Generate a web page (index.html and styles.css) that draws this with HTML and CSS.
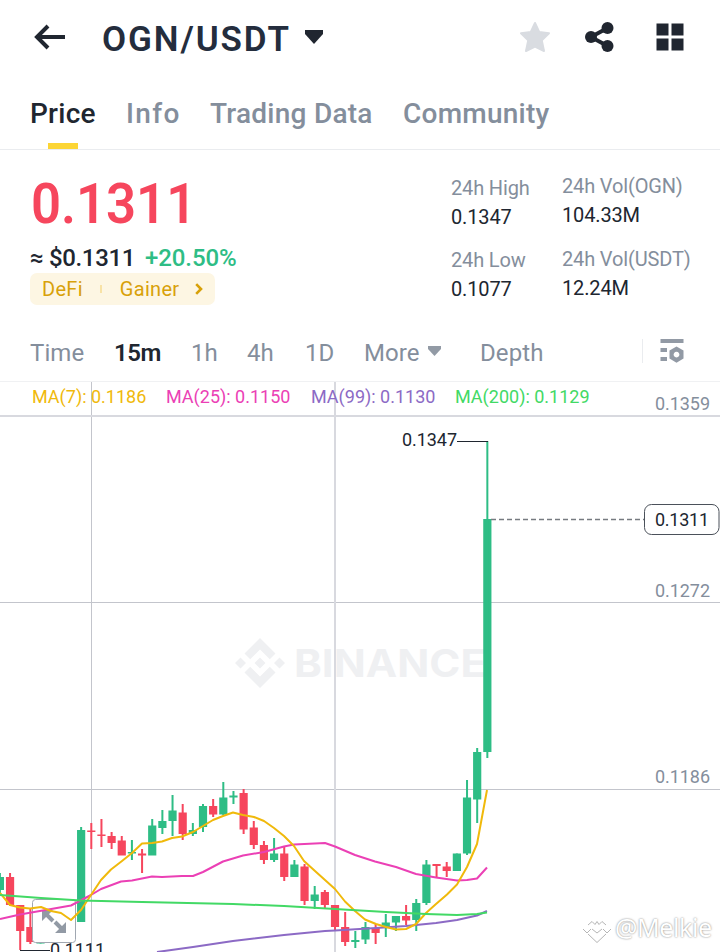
FILE: index.html
```html
<!DOCTYPE html>
<html lang="en">
<head>
  <meta charset="UTF-8" />
  <meta name="viewport" content="width=device-width, initial-scale=1.0"/>
  <title>OGN/USDT</title>
  <link rel="stylesheet" href="styles.css">
</head>
<body>

  <header class="topbar">
    <svg class="back" width="32" height="26" viewBox="0 0 32 26">
      <path d="M14 2 L3 13 L14 24 M3 13 H31" fill="none" stroke="#202630" stroke-width="4"/>
    </svg>
    <h1>OGN/USDT</h1>
    <svg class="caret" width="18" height="14" viewBox="0 0 18 14">
      <path d="M0 0 H18 V4 L9 14 L0 4 Z" fill="#202630"/>
    </svg>
    <div class="actions">
      <svg width="32" height="32" viewBox="0 0 32 32">
        <path d="M16 2 L20.2 11 L30 12.2 L22.8 19.4 L25 30 L16 25.5 L7 30 L9.2 19.4 L2 12.2 L11.8 11 Z" fill="#d9dce1" stroke="#d9dce1" stroke-width="2" stroke-linejoin="round"/>
      </svg>
      <svg width="30" height="32" viewBox="0 0 30 32">
        <path d="M23.5 7 L7 16 L23.5 25" fill="none" stroke="#202630" stroke-width="4"/>
        <circle cx="7" cy="16" r="6" fill="#202630"/>
        <circle cx="23.5" cy="7" r="6" fill="#202630"/>
        <circle cx="23.5" cy="25" r="6" fill="#202630"/>
      </svg>
      <svg width="28" height="28" viewBox="0 0 28 28">
        <path d="M0.5 0.5 h12 v12 h-12 z M15.5 0.5 h12 v12 h-12 z M0.5 15.5 h12 v12 h-12 z M15.5 15.5 h12 v12 h-12 z" fill="#202630"/>
      </svg>
    </div>
  </header>

  <nav class="tabs">
    <span class="tab active">Price</span>
    <span class="tab info">Info</span>
    <span class="tab">Trading Data</span>
    <span class="tab">Community</span>
  </nav>

  <section class="summary">
    <div class="quote">
      <div class="last-price">0.1311</div>
      <div class="fiat"><span>≈ $0.1311</span><span class="change">+20.50%</span></div>
      <div class="tags">
        <span>DeFi</span>
        <i class="sep"></i>
        <span>Gainer</span>
        <svg width="8" height="12" viewBox="0 0 8 12"><path d="M1.2 1.2 L6 6 L1.2 10.8" fill="none" stroke="#d8a109" stroke-width="2.6"/></svg>
      </div>
    </div>
    <dl class="stats">
      <div><dt>24h High</dt><dd>0.1347</dd></div>
      <div><dt>24h Low</dt><dd>0.1077</dd></div>
    </dl>
    <dl class="stats volume">
      <div><dt>24h Vol(OGN)</dt><dd>104.33M</dd></div>
      <div><dt>24h Vol(USDT)</dt><dd>12.24M</dd></div>
    </dl>
  </section>

  <nav class="intervals">
    <span>Time</span>
    <span class="selected">15m</span>
    <span>1h</span>
    <span>4h</span>
    <span>1D</span>
    <span class="more">More
      <svg width="13" height="10" viewBox="0 0 13 10"><path d="M0 0 H13 V3 L6.5 10 L0 3 Z" fill="#929aa5"/></svg>
    </span>
    <span>Depth</span>
    <div class="settings">
      <svg width="24" height="24" viewBox="0 0 24 24">
        <path d="M0.5 0 H23.5 V4 H0.5 Z M0.5 9 H7 V13 H0.5 Z M0.5 18 H7 V22 H0.5 Z" fill="#929aa5"/>
        <path fill-rule="evenodd" d="M16.5 7.5 L23.5 11.5 V19.5 L16.5 23.8 L9.5 19.5 V11.5 Z M16.5 12.7 a2.9 2.9 0 1 0 0.01 0 Z" fill="#929aa5"/>
      </svg>
    </div>
  </nav>

  <main class="chart">
    <svg width="720" height="570" viewBox="0 382 720 570">
      <!-- watermark -->
      <g fill="#eff0f2">
        <path d="M260 638 L275.5 653.5 L269.8 659.2 L260 649.4 L250.2 659.2 L244.5 653.5 Z"/>
        <path d="M260 688 L275.5 672.5 L269.8 666.8 L260 676.6 L250.2 666.8 L244.5 672.5 Z"/>
        <path d="M260 657.5 l5.5 5.5 l-5.5 5.5 l-5.5 -5.5 z M240.5 657.5 l5.5 5.5 l-5.5 5.5 l-5.5 -5.5 z M279.5 657.5 l5.5 5.5 l-5.5 5.5 l-5.5 -5.5 z"/>
        <text class="brand" x="294" y="677" textLength="192" lengthAdjust="spacingAndGlyphs">BINANCE</text>
      </g>

      <!-- grid -->
      <path d="M0 602.5 H720 M0 789.5 H720 M91.5 382 V952" stroke="#c3c5cc"/>
      <path d="M0 416 H720 M335 382 V952" stroke="#d8d9df" stroke-width="2"/>

      <g class="axis">
        <text x="655" y="410" textLength="55">0.1359</text>
        <text x="655" y="597" textLength="55">0.1272</text>
        <text x="655" y="783" textLength="55">0.1186</text>
      </g>

      <g id="candles"></g>

      <!-- fullscreen toggle -->
      <rect x="32.5" y="899.5" width="43" height="43" rx="3" fill="#fff" stroke="#a0a7b1"/>
      <path d="M42 910 H53 L42 921 Z M66 933 H55 L66 922 Z" fill="#929aa5"/>
      <path d="M46 914 L53 921 M55 922 L62 929" stroke="#929aa5" stroke-width="4"/>

      <g class="ma">
        <polyline stroke="#8c6ac5" points="157,952 193,947 233,941 284,935 325,931 335,930.5 376,928 406,926 436,923 457,920 477,915.5 487,911"/>
        <polyline stroke="#eb40b5" points="0,919 20,914.5 71,905.5 91,895 101,889 121,881.5 132,880.5 152,876.5 162,877 182,876 193,876 203,872 223,861.5 243,855.5 264,852 284,846.5 294,844.5 325,843 335,846.5 355,855 375,861.5 396,867 416,874 436,877.5 457,880.5 467,880 477,878.5 487,867.5"/>
        <polyline stroke="#f0b90b" points="0,893 10,905 20,907.5 30,908.5 41,907 51,911 61,913 71,920 81,910 91,895 101,880 111,869.5 122,861 132,853 142,843.5 152,843 162,841.5 172,838 182,836.5 193,832 203,826 213,820 223,816 233,812.5 243,815 254,817 264,821 274,828 284,836 294,846 304,861 315,871 325,880 335,889 345,901.5 355,911 365,919.5 376,924 386,927 396,929.5 406,929 416,924 426,913 436,904 447,894.5 457,884.5 467,867 477,844 487,790"/>
        <polyline stroke="#42d965" points="0,895 41,898 81,900.5 142,902 233,904 284,906 335,909 386,912 426,914 457,915 477,914 487,912.5"/>
      </g>

      <!-- high / low / last markers -->
      <path d="M457 441.5 H488 M20 950.5 H50" stroke="#202630"/>
      <path d="M491 519.5 H644" stroke="#777b81" stroke-width="1.3" stroke-dasharray="5 3"/>
      <rect x="644.5" y="504.5" width="74.5" height="30" rx="7" fill="#fff" stroke="#4b515a"/>
      <g class="marker">
        <text x="402" y="446" textLength="55">0.1347</text>
        <text x="655" y="526" textLength="54">0.1311</text>
        <text x="50" y="956" textLength="55">0.1111</text>
      </g>

      <g class="author">
        <path d="M588 925 l4 -3.5 l3 3 l2 -3 l2 3 l3 -3 l4 3.5 M583 929 l4 4 l4 -4 M592 929 l5 4 l5 -4 M603 929 l4 4 l4 -4 M588 934 l9 8.5 l9 -8.5"/>
        <text x="615" y="937" textLength="97">@Melkie</text>
      </g>
    </svg>

    <div class="legend">
      <span class="ma7">MA(7): 0.1186</span>
      <span class="ma25">MA(25): 0.1150</span>
      <span class="ma99">MA(99): 0.1130</span>
      <span class="ma200">MA(200): 0.1129</span>
    </div>
  </main>

  <script src="script.js"></script>
</body>
</html>
```
FILE: styles.css
```css
html, body {
  margin: 0;
  padding: 0;
}

body {
  width: 720px;
  height: 952px;
  overflow: hidden;
  background-color: #fff;
  color: #202630;
  font-family: Roboto, "Liberation Sans", sans-serif;
}

svg {
  display: block;
}

.topbar {
  display: flex;
  align-items: center;
  height: 74px;
  padding: 0 36px 0 34px;
}

h1 {
  margin: 6px 0 0 36px;
  font-size: 35px;
  line-height: 42px;
  font-weight: 600;
  letter-spacing: 1.9px;
  color: #242d3d;
  width: 203px;
  white-space: nowrap;
}

.actions {
  display: flex;
  align-items: center;
  margin-left: auto;
}

.actions svg:nth-child(2) {
  margin: 0 42px 0 33px;
}

.tabs {
  display: grid;
  grid-template-columns: 96px 84px 193px auto;
  height: 75px;
  padding-left: 30px;
  border-bottom: 1px solid #eaecef;
}

.tab {
  position: relative;
  padding-top: 24px;
  font-size: 28px;
  line-height: 32px;
  font-weight: 500;
  letter-spacing: 0.25px;
  color: #848e9c;
  white-space: nowrap;
}

.tab.info {
  letter-spacing: 1.4px;
}

.tab.active {
  color: #202630;
}

.tab.active::after {
  content: "";
  position: absolute;
  left: 18px;
  bottom: 0;
  width: 30px;
  height: 6px;
  background-color: #fcd535;
}

.summary {
  display: flex;
  height: 172px;
  padding-left: 30px;
}

.quote {
  width: 421px;
  padding-top: 26px;
}

.last-price {
  padding-left: 1px;
  font-size: 56px;
  line-height: 56px;
  font-weight: 600;
  color: #f6465d;
  transform: scaleX(0.94);
  transform-origin: left;
}

.fiat {
  display: flex;
  gap: 10px;
  margin-top: 12px;
  font-size: 24px;
  line-height: 28px;
  font-weight: 500;
  letter-spacing: -0.35px;
}

.change {
  color: #2ebd85;
  letter-spacing: -0.1px;
}

.tags {
  display: flex;
  align-items: center;
  box-sizing: border-box;
  width: 185px;
  height: 32px;
  margin-top: 1px;
  padding-left: 12px;
  border-radius: 7px;
  background-color: #fdf6e3;
  color: #d8a109;
  font-size: 20px;
  letter-spacing: 0.3px;
}

.sep {
  width: 2px;
  height: 8px;
  margin: 0 18px 0 17px;
  background-color: #f8e2a5;
}

.tags svg {
  margin-left: 16px;
}

.stats {
  width: 111px;
  margin: 0;
  padding-top: 25px;
  white-space: nowrap;
}

.stats div {
  height: 72px;
}

.stats.volume {
  padding-top: 23px;
}

.stats.volume div {
  height: 73px;
}

dt {
  font-size: 20px;
  line-height: 26px;
  letter-spacing: -0.15px;
  color: #848e9c;
}

dd {
  margin: 4px 0 0;
  font-size: 20px;
  line-height: 24px;
  letter-spacing: -0.15px;
}

.intervals {
  display: grid;
  grid-template-columns: 84px 77px 56px 58px 59px 116px 162px auto;
  height: 59px;
  padding-left: 30px;
  border-bottom: 1px solid #f0f1f3;
  font-size: 24px;
  line-height: 63px;
  letter-spacing: 0.1px;
  color: #848e9c;
}

.selected {
  color: #202630;
  font-weight: 600;
  letter-spacing: -0.5px;
}

.more {
  display: flex;
  gap: 8px;
}

.more svg {
  margin-top: 24px;
}

.settings {
  height: 24px;
  margin-top: 17px;
  padding-left: 17px;
  border-left: 1px solid #eaecef;
}

.chart {
  position: relative;
  height: 570px;
}

.legend {
  position: absolute;
  left: 32px;
  top: 4px;
  display: grid;
  grid-template-columns: 134px 145px 144px auto;
  font-size: 18px;
  line-height: 22px;
  white-space: nowrap;
}

.ma7 { color: #f0b90b; }
.ma25 { color: #eb40b5; }
.ma99 { color: #8c6ac5; }
.ma200 { color: #42d965; }

.ma {
  fill: none;
  stroke-width: 2;
  stroke-linejoin: round;
}

.axis {
  font-size: 18px;
  fill: #848e9c;
}

.marker {
  font-size: 18px;
  fill: #202630;
}

.brand {
  font-family: Inter, sans-serif;
  font-size: 38px;
  font-weight: 700;
}

.author path {
  fill: none;
  stroke: #b5b5b5;
}

.author text {
  font-family: "Noto Sans", sans-serif;
  font-size: 25px;
  fill: #fff;
  text-shadow: 0 0 2px #777;
}
```
FILE: script.js
```javascript
// direction, body top, body bottom, wick top, wick bottom
const candles = [
  ["up", 877, 890, 873, 893],
  ["down", 877, 905, 873, 906],
  ["down", 905, 931, 905, 950],
  ["down", 927, 942, 908, 944],
  ["up", 942, 943.5, 942, 943.5],
  null,
  null,
  null,
  ["up", 830, 922, 827, 922],
  ["down", 830.5, 832, 823, 849],
  ["down", 834.5, 836, 819, 847],
  ["down", 836, 843, 832, 849],
  ["down", 840.5, 855.5, 836, 855],
  ["up", 852, 853.5, 840, 860],
  ["down", 853.5, 855.5, 849, 873],
  ["up", 825.5, 855.5, 819, 855],
  ["up", 821, 828, 810, 834],
  ["up", 810.5, 821, 795, 836],
  ["down", 812.5, 834, 804, 840],
  ["up", 830, 834, 823, 836],
  ["up", 806, 827, 804, 832],
  ["down", 806, 814.5, 799, 817],
  ["up", 797.5, 814.5, 782, 815],
  ["up", 795.5, 797.5, 791, 804],
  ["down", 793, 829.5, 789, 834],
  ["down", 827.5, 845, 821, 849],
  ["down", 845, 860, 841, 864],
  ["up", 853.5, 860, 838, 862],
  ["down", 853.5, 877, 847, 881],
  ["up", 864.5, 877, 860, 877],
  ["down", 866.5, 901, 864, 905],
  ["up", 894.5, 901, 886, 909],
  ["down", 892, 905, 890, 909],
  ["down", 905, 927, 905, 930],
  ["down", 927, 942, 912, 946],
  ["up", 940, 942, 931, 948],
  ["up", 927, 939.5, 922, 944],
  ["down", 928, 933, 924, 944],
  ["up", 922.5, 927, 914, 937],
  ["up", 916, 922.5, 916, 931],
  ["down", 916, 920.5, 905, 925],
  ["up", 903, 920, 899, 931],
  ["up", 864.5, 903, 860, 905],
  ["down", 864, 866, 864, 877],
  ["down", 866.5, 871, 862, 877],
  ["up", 853.5, 871, 853.5, 871],
  ["up", 797.5, 853.5, 780, 855],
  ["up", 752, 799.5, 748, 823],
  ["up", 519, 752, 441, 758]
];

const colors = { up: "#2ebd85", down: "#f6465d" };
const step = 10.155;
const layer = document.getElementById("candles");

function addBar(x, y, width, height, fill) {
  const rect = document.createElementNS("http://www.w3.org/2000/svg", "rect");
  rect.setAttribute("x", x);
  rect.setAttribute("y", y);
  rect.setAttribute("width", width);
  rect.setAttribute("height", height);
  rect.setAttribute("fill", fill);
  layer.appendChild(rect);
}

candles.forEach((candle, i) => {
  if (!candle) return;
  const [dir, top, bottom, high, low] = candle;
  const x = i * step - 0.1;
  addBar(x - 4.1, top, 8.2, bottom - top, colors[dir]);
  addBar(x - 1, high, 2, low - high, colors[dir]);
});
```
